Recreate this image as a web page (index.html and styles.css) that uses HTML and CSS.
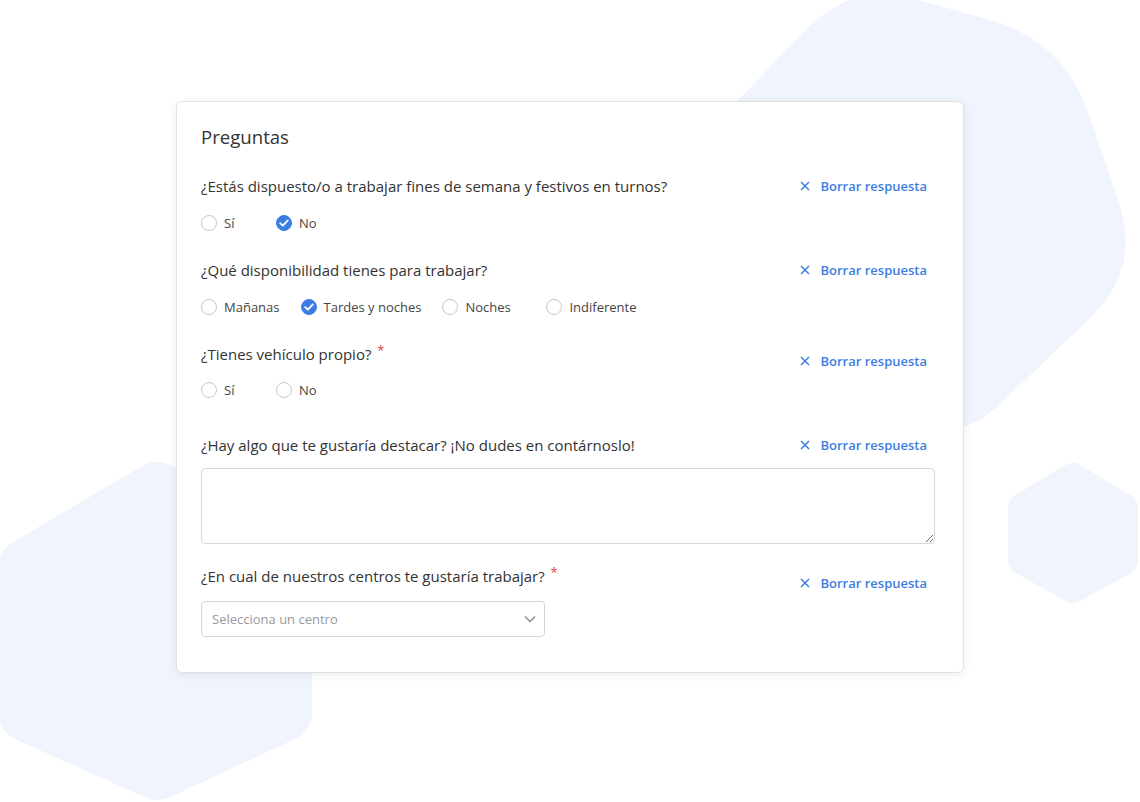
FILE: index.html
```html
<!DOCTYPE html>
<html lang="es">
<head>
    <meta charset="UTF-8">
    <meta name="viewport" content="width=device-width, initial-scale=1.0">
    <title>Preguntas</title>
    <link rel="stylesheet" href="styles.css">
</head>
<body>
    <div class="page">
        <svg class="bg" width="1140" height="802" viewBox="0 0 1140 802" aria-hidden="true">
            <path class="blob" d="M 796 40 Q 850 -22 918 0 L 997 22 Q 1065 45 1088 112 L 1118 200 Q 1142 268 1090 318 L 1000 404 Q 950 452 895 410 L 693 245 Q 640 200 690 150 Z"/>
            <polygon class="blob blob--round-lg" points="157,492 282,568 282,712 157,770 28,712 28,568"/>
            <polygon class="blob blob--round-sm" points="1073,478 1123,508 1123,560 1073,588 1023,560 1023,508"/>
        </svg>

        <main class="card">
            <h1 class="card-title">Preguntas</h1>

            <section class="question">
                <div class="question-head">
                    <span class="question-label">¿Estás dispuesto/o a trabajar fines de semana y festivos en turnos?</span>
                    <button class="clear">
                        <svg width="10" height="10" viewBox="0 0 10 10"><path d="M1 1 L9 9 M9 1 L1 9"/></svg>
                        Borrar respuesta
                    </button>
                </div>
                <div class="options">
                    <label class="option"><span class="radio"></span>Sí</label>
                    <label class="option"><span class="radio radio--checked"><svg width="10" height="8" viewBox="0 0 10 8"><path d="M1.2 4.2 L3.8 6.6 L8.8 1.4"/></svg></span>No</label>
                </div>
            </section>

            <section class="question">
                <div class="question-head">
                    <span class="question-label">¿Qué disponibilidad tienes para trabajar?</span>
                    <button class="clear">
                        <svg width="10" height="10" viewBox="0 0 10 10"><path d="M1 1 L9 9 M9 1 L1 9"/></svg>
                        Borrar respuesta
                    </button>
                </div>
                <div class="options">
                    <label class="option"><span class="radio"></span>Mañanas</label>
                    <label class="option"><span class="radio radio--checked"><svg width="10" height="8" viewBox="0 0 10 8"><path d="M1.2 4.2 L3.8 6.6 L8.8 1.4"/></svg></span>Tardes y noches</label>
                    <label class="option option--wide"><span class="radio"></span>Noches</label>
                    <label class="option"><span class="radio"></span>Indiferente</label>
                </div>
            </section>

            <section class="question question--required">
                <div class="question-head">
                    <span class="question-label">¿Tienes vehículo propio? <span class="required">*</span></span>
                    <button class="clear">
                        <svg width="10" height="10" viewBox="0 0 10 10"><path d="M1 1 L9 9 M9 1 L1 9"/></svg>
                        Borrar respuesta
                    </button>
                </div>
                <div class="options">
                    <label class="option"><span class="radio"></span>Sí</label>
                    <label class="option"><span class="radio"></span>No</label>
                </div>
            </section>

            <section class="question question--text">
                <div class="question-head">
                    <span class="question-label">¿Hay algo que te gustaría destacar? ¡No dudes en contárnoslo!</span>
                    <button class="clear">
                        <svg width="10" height="10" viewBox="0 0 10 10"><path d="M1 1 L9 9 M9 1 L1 9"/></svg>
                        Borrar respuesta
                    </button>
                </div>
                <textarea class="textarea"></textarea>
            </section>

            <section class="question question--required question--select">
                <div class="question-head">
                    <span class="question-label">¿En cual de nuestros centros te gustaría trabajar? <span class="required">*</span></span>
                    <button class="clear">
                        <svg width="10" height="10" viewBox="0 0 10 10"><path d="M1 1 L9 9 M9 1 L1 9"/></svg>
                        Borrar respuesta
                    </button>
                </div>
                <div class="select">
                    <span>Selecciona un centro</span>
                    <svg width="12" height="8" viewBox="0 0 12 8"><path d="M1 1.5 L6 6.5 L11 1.5"/></svg>
                </div>
            </section>
        </main>
    </div>
</body>
</html>
```

FILE: styles.css
```css
body {
    margin: 0;
    font-family: "Open Sans", "Noto Sans", sans-serif;
    color: #333;
    background-color: #fff;
}

.page {
    position: relative;
    min-height: 802px;
    box-sizing: border-box;
    display: flex;
    justify-content: center;
    align-items: flex-start;
    padding-top: 101px;
    overflow: hidden;
}

/* decorative shapes behind the card */
.bg {
    position: absolute;
    top: 0;
    left: 0;
}

.blob {
    fill: #eff4fd;
    stroke: #eff4fd;
    stroke-width: 0;
}

.blob--round-lg {
    stroke-width: 60;
    stroke-linejoin: round;
}

.blob--round-sm {
    stroke-width: 30;
    stroke-linejoin: round;
}

.card {
    position: relative;
    width: 788px;
    box-sizing: border-box;
    background-color: #fff;
    border: 1px solid #e2e2e2;
    border-radius: 6px;
    box-shadow: 0 2px 10px rgba(0, 0, 0, 0.07);
    padding: 22px 28px 35px 24px;
}

.card-title {
    margin: 0 0 25px;
    font-size: 18.6px;
    line-height: 26px;
    font-weight: 400;
    color: #333;
}

.question {
    margin-top: 25px;
}

.card-title + .question {
    margin-top: 0;
}

.question--text {
    margin-top: 33px;
}

.question--select {
    margin-top: 21px;
}

.question-head {
    display: flex;
    justify-content: space-between;
    align-items: flex-start;
}

.question-label {
    font-size: 15px;
    line-height: 22px;
    color: #333;
}

.required {
    position: relative;
    top: -5px;
    margin-left: 2px;
    font-size: 13px;
    color: #e5393b;
}

.clear {
    display: flex;
    align-items: center;
    gap: 10px;
    padding: 0 8px 0 0;
    border: none;
    background: none;
    font-family: inherit;
    font-size: 13px;
    font-weight: 600;
    line-height: 22px;
    color: #3d7ddf;
    cursor: pointer;
}

.clear svg path {
    stroke: #3d7ddf;
    stroke-width: 1.5;
    fill: none;
}

/* the link sits a little lower next to labels with an asterisk */
.question--required .clear {
    margin-top: 7px;
    margin-bottom: -7px;
}

.options {
    display: flex;
    margin-top: 15px;
}

.question--required .options {
    margin-top: 13px;
}

.option {
    display: flex;
    align-items: center;
    gap: 7px;
    min-width: 54px;
    margin-right: 21px;
    font-size: 13px;
    line-height: 22px;
    color: #444;
}

.option--wide {
    min-width: 83px;
}

.radio {
    display: flex;
    align-items: center;
    justify-content: center;
    width: 16px;
    height: 16px;
    box-sizing: border-box;
    border: 1px solid #c8c8c8;
    border-radius: 50%;
    background-color: #fff;
}

.radio--checked {
    background-color: #3b7de3;
    border-color: #3b7de3;
}

.radio svg path {
    stroke: #fff;
    stroke-width: 1.8;
    fill: none;
    stroke-linecap: round;
    stroke-linejoin: round;
}

.textarea {
    display: block;
    width: 100%;
    height: 76px;
    box-sizing: border-box;
    margin-top: 12px;
    border: 1px solid #d9d9d9;
    border-radius: 4px;
    resize: vertical;
    font-family: inherit;
    font-size: 14px;
    outline: none;
}

.select {
    display: flex;
    align-items: center;
    justify-content: space-between;
    width: 344px;
    height: 36px;
    box-sizing: border-box;
    margin-top: 13px;
    padding: 0 8px 0 10px;
    border: 1px solid #d6d6d6;
    border-radius: 4px;
    font-size: 13px;
    color: #9a9a9a;
}

.select svg path {
    stroke: #888;
    stroke-width: 1.4;
    fill: none;
}
```
